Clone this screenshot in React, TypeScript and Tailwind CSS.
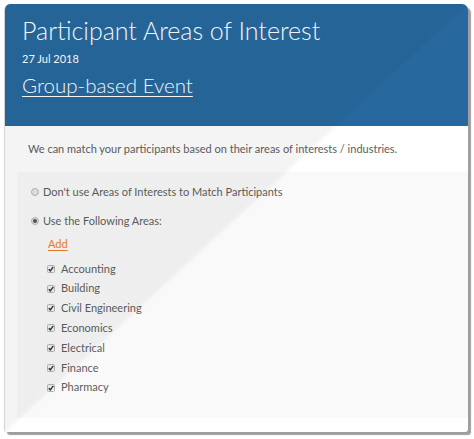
import React from "react";

function Radio({ checked }: { checked?: boolean }) {
  return (
    <span className="inline-flex items-center justify-center w-[8px] h-[8px] rounded-full border border-[#b8b8b8] bg-[#e6e6e6] mr-[4px] shrink-0">
      {checked && <span className="block w-[4px] h-[4px] rounded-full bg-[#555]" />}
    </span>
  );
}

function Check() {
  return (
    <svg width="8" height="8" viewBox="0 0 8 8" className="mr-[6px] shrink-0">
      <rect x="0.5" y="0.5" width="7" height="7" rx="1" fill="#f0f0f0" stroke="#b5b5b5" />
      <path d="M1.8 4.2 L3.3 5.8 L6.3 1.8" fill="none" stroke="#333" strokeWidth="1.4" />
    </svg>
  );
}

const areas = [
  "Accounting",
  "Building",
  "Civil Engineering",
  "Economics",
  "Electrical",
  "Finance",
  "Pharmacy",
];

export default function App() {
  return (
    <div className="w-[474px] h-[439px] bg-white pt-[4px] pl-[4px] font-['Lato','Noto_Sans',sans-serif]">
      <div className="relative w-[464px] h-[428px] rounded-t-[6px] rounded-b-[3px] border-l border-[#d4d4d4] bg-white shadow-[3px_3px_1px_rgba(0,0,0,0.38)] overflow-hidden">
        <div className="h-[122px] bg-[#27689e] pl-[17px] pt-[11px] text-white">
          <div className="text-[25px] leading-[1.2] font-light">Participant Areas of Interest</div>
          <div className="mt-[7px] text-[11px] leading-[1.2]">27 Jul 2018</div>
          <div className="mt-[8px] text-[20.5px] leading-[1.2] font-light">
            <span className="underline decoration-1 underline-offset-[3px]">Group-based Event</span>
          </div>
        </div>
        <div className="h-[46px] flex items-center pl-[23px] text-[11px] text-[#5e5e5e]">
          We can match your participants based on their areas of interests / industries.
        </div>
        <div className="ml-[12px] h-[246px] bg-[#f9f9f9] pt-[10px] pl-[14px] text-[11px] text-[#5e5e5e]">
          <div className="h-[20px] flex items-center">
            <Radio />
            <span>Don't use Areas of Interests to Match Participants</span>
          </div>
          <div className="mt-[9px] h-[20px] flex items-center">
            <Radio checked />
            <span>Use the Following Areas:</span>
          </div>
          <div className="mt-[3px] h-[20px] flex items-center pl-[17px]">
            <span className="text-[#f07f22] underline underline-offset-[2px]">Add</span>
          </div>
          <div className="mt-[5px] flex flex-col pl-[16px]">
            {areas.map((a) => (
              <div key={a} className="h-[19.8px] flex items-center">
                <Check />
                <span>{a}</span>
              </div>
            ))}
          </div>
        </div>
        <div className="pointer-events-none absolute inset-0 bg-[linear-gradient(to_bottom_right,rgba(0,0,0,0.045)_49.6%,rgba(0,0,0,0)_50.4%)]" />
      </div>
    </div>
  );
}
